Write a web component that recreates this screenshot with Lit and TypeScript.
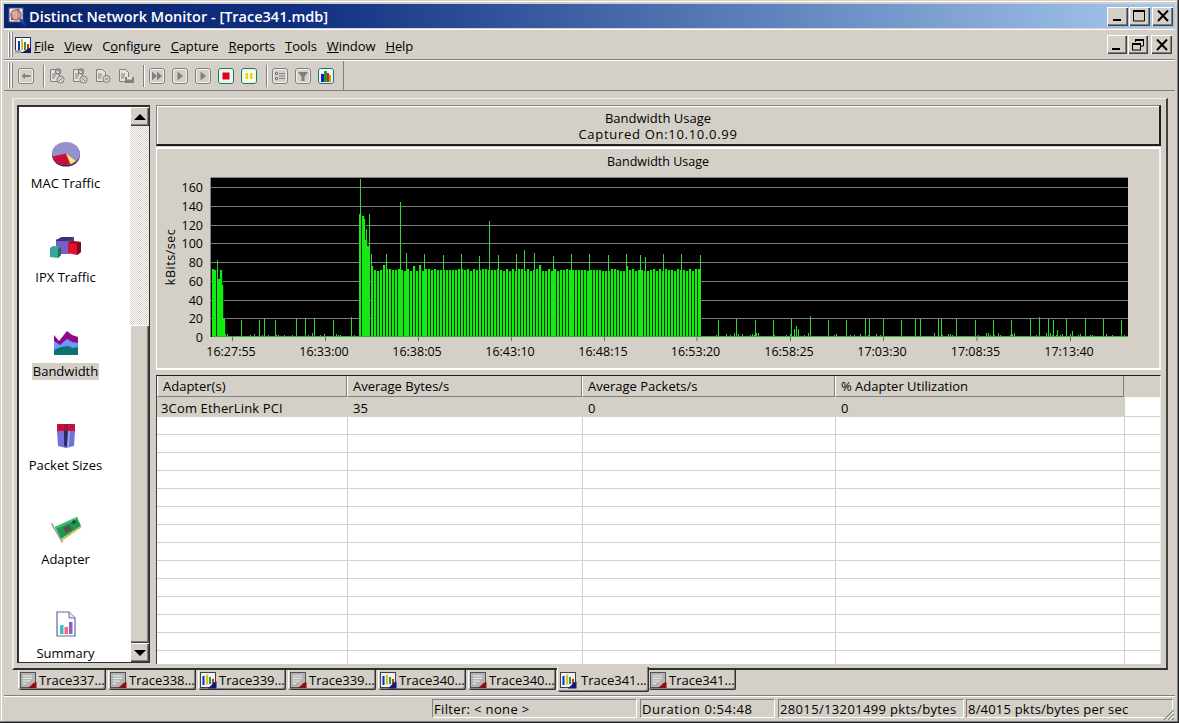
import { LitElement, html, css, svg } from "lit";
import { customElement } from "lit/decorators.js";

const FONT = 13;

/* ---------- chart data ---------- */
let seed = 12345;
const rnd = () => {
  seed = (seed * 1664525 + 1013904223) >>> 0;
  return seed / 4294967296;
};
const Y0 = 337;
const SCALE = 150 / 160;
const thick: [number, number][] = [
  [212, 72], [214, 71], [218, 62], [220, 71], [221, 55], [223, 20],
  [359, 131], [362, 129], [363, 126], [365, 103], [367, 97],
];
for (let x = 371; x < 699; x += 3) {
  let v = 70 + rnd() * 3;
  if (rnd() < 0.06) v = 75 + rnd() * 2;
  thick.push([x, v]);
}
const thin: [number, number][] = [
  [217, 82], [225, 3], [227, 3], [230, 1],
  [241, 18], [259, 18], [264, 20], [275, 18], [296, 20], [305, 20], [314, 20], [333, 18], [351, 21],
  [360, 168], [366, 115], [369, 131], [371, 88],
  [386, 89], [400, 144], [406, 90], [424, 88], [443, 87], [461, 89], [479, 86], [489, 124],
  [498, 87], [516, 88], [524, 93], [534, 90], [553, 86], [571, 88], [589, 88], [608, 87],
  [626, 88], [640, 87], [645, 85], [663, 88], [681, 89], [700, 87],
  [718, 18], [736, 19], [755, 18], [773, 18], [791, 19], [794, 8], [796, 12], [798, 8], [810, 22],
  [828, 18], [846, 18], [865, 19], [869, 19], [883, 19], [901, 18], [915, 19], [920, 19],
  [938, 19], [941, 19], [956, 19], [975, 18], [993, 18], [1011, 18], [1030, 19], [1039, 21],
  [1048, 19], [1053, 18], [1057, 7], [1066, 19], [1072, 6], [1085, 20], [1103, 19], [1121, 18],
];
for (let x = 232; x < 1128; x += 2) {
  if (x > 357 && x < 702) continue;
  if (rnd() < 0.45) thin.push([x, 1 + rnd() * rnd() * 5]);
}
const pathOf = (d: [number, number][], w: number) =>
  d.map(([x, v]) => { const h = Math.max(1, Math.round(v * SCALE)); return `M${x} ${Y0 - h}h${w}v${h}h-${w}z`; }).join("");
const THICK = pathOf(thick, 2);
const HALO = pathOf(thick, 3);
const THIN = pathOf(thin, 1);
const GRID = [187, 206, 225, 243, 262, 281, 300, 318];
const YLABELS: [string, number][] = [["160", 187], ["140", 206], ["120", 225], ["100", 243], ["80", 262], ["60", 281], ["40", 300], ["20", 318], ["0", 337]];
const XLABELS: [string, number][] = [["16:27:55", 232.5], ["16:33:00", 325.5], ["16:38:05", 418.5], ["16:43:10", 511.5], ["16:48:15", 604.5], ["16:53:20", 697], ["16:58:25", 790.5], ["17:03:30", 883.5], ["17:08:35", 977], ["17:13:40", 1070.5]];

/* ---------- icons ---------- */
const appIcon = html`<svg width="19" height="21" viewBox="0 0 19 21">
  <rect x="1" y="2" width="14" height="14" fill="#e8e8f4" stroke="#3050a0"/>
  <rect x="3" y="8" width="2.5" height="6" fill="#c02030"/><rect x="6" y="5" width="2.5" height="9" fill="#e0a020"/><rect x="9" y="3" width="2.5" height="11" fill="#d04020"/>
  <circle cx="8" cy="9" r="5" fill="#a8c8f0" fill-opacity=".6" stroke="#d06040" stroke-width="1.5"/>
  <path d="M12 13l5 6" stroke="#2040a0" stroke-width="2.4"/></svg>`;
const menuIcon = html`<svg width="17" height="17" viewBox="0 0 17 17">
  <rect x=".5" y=".5" width="15" height="15" fill="#fff" stroke="#203060"/>
  <rect x="3" y="4" width="2" height="9" fill="#1030c0"/><rect x="6" y="2" width="2" height="11" fill="#d0c020"/><rect x="9" y="5" width="2" height="8" fill="#20a030"/><rect x="12" y="7" width="2" height="6" fill="#d03020"/>
  <path d="M6 16L16 16V10z" fill="#101870"/><rect x="0" y="13" width="6" height="3" fill="#a0a0a0"/></svg>`;

const btn = (body: unknown, stroke = "#808080", fill = "#d4d0c8") => html`<svg class="tb" width="16" height="16" viewBox="0 0 16 16">
  <rect x=".5" y=".5" width="15" height="15" rx="2.5" fill="${fill}" stroke="${stroke}"/>
  <rect x="1.5" y="1.5" width="13" height="13" rx="1.5" fill="none" stroke="#f4f2ec" stroke-opacity=".9"/>${body}</svg>`;
const G = "#808080";
const docIcon = (over: unknown) => html`<svg class="tb" width="16" height="16" viewBox="0 0 16 16">
  <path d="M1.5 1.5h6l3 3v9h-9z" fill="#e4e2da" stroke="${G}"/><path d="M3 6h4M3 8h4M3 10h3" stroke="${G}"/>${over}</svg>`;
const TOOLS = [
  [btn(svg`<path d="M3 8l4.500-4v2.500h5.500v3H7.500V12z" fill="${G}" stroke="#f4f2ec" stroke-width=".6"/>`)],
  [
    docIcon(svg`<circle cx="9" cy="3.5" r="2.5" fill="none" stroke="${G}" stroke-width="1.4"/><circle cx="11.5" cy="11.5" r="3.6" fill="#d4d0c8" stroke="${G}"/><path d="M10 13l3-3" stroke="${G}"/>`),
    docIcon(svg`<circle cx="9" cy="3.5" r="2.5" fill="none" stroke="${G}" stroke-width="1.4"/><circle cx="11.5" cy="11.5" r="3.6" fill="#d4d0c8" stroke="${G}"/><path d="M10 10l3 3" stroke="${G}"/>`),
    docIcon(svg`<circle cx="11.5" cy="11" r="3.6" fill="#d4d0c8" stroke="${G}"/><path d="M10 11h3" stroke="${G}"/>`),
    docIcon(svg`<path d="M7 9h9v6H7z" fill="${G}"/><path d="M9 9h5v2.500H9z" fill="#e4e2da"/>`),
  ],
  [
    btn(svg`<path d="M3 3.500l5 4.500-5 4.500zM8 3.500l5 4.500-5 4.500z" fill="${G}"/>`),
    btn(svg`<path d="M5.500 3.500l5.500 4.500-5.500 4.500z" fill="${G}"/>`),
    btn(svg`<path d="M5.500 3.500l5.500 4.500-5.500 4.500z" fill="${G}"/>`),
    btn(svg`<rect x="4.500" y="4.500" width="7" height="7" fill="#e00018"/>`, "#107878", "#f2f2ec"),
    btn(svg`<rect x="4.500" y="5" width="2.500" height="6" fill="#e6d818"/><rect x="9" y="5" width="2.500" height="6" fill="#e6d818"/>`, "#107878", "#fbfbe4"),
  ],
  [
    btn(svg`<path d="M3.500 4.500h2v2h-2zM3.500 9.500h2v2h-2z" fill="none" stroke="${G}"/><path d="M7 5.500h6M7 10.500h6M7 8h6" stroke="${G}"/>`),
    btn(svg`<path d="M3 4h10L9.500 8.500V13h-3V8.500z" fill="${G}"/>`),
    btn(svg`<rect x="2" y="2" width="12" height="12" fill="#f8f8f8"/><rect x="3" y="6" width="3" height="8" fill="#1020c0"/><rect x="6" y="3" width="3" height="11" fill="#18a028"/><rect x="9" y="5" width="2" height="9" fill="#d02018"/><rect x="11" y="7" width="2" height="7" fill="#e09010"/>`, "#107878", "#f2f2ec"),
  ],
];

const ICONS: Record<string, unknown> = {
  pie: html`<svg width="30" height="26" viewBox="0 0 30 26">
    <ellipse cx="15" cy="14" rx="14" ry="11.500" fill="#3a2050"/>
    <ellipse cx="15" cy="12.500" rx="14" ry="11.500" fill="#9491cb"/>
    <path d="M15 12.500L1.500 15.500C3 20.500 8 24 14 24c2 0 4-.3 5.500-1z" fill="#c80f3a"/>
    <path d="M15 12.500l4.500 10.500c2-.7 4-2 5-3.200z" fill="#f3ee62"/></svg>`,
  cubes: html`<svg width="32" height="22" viewBox="0 0 32 22">
    <path d="M6 3l6-3h12v13l-5 4H6z" fill="#7b5cc9"/><path d="M6 3l6-3h12l-5 4H6z" fill="#3d3270"/><path d="M19 4l5-4v13l-5 4z" fill="#4f3b94"/>
    <path d="M18 6l4-2 9 1v10l-4 3-9-2z" fill="#e30f2e"/><path d="M27 7l4-2v10l-4 3z" fill="#7a0a20"/><path d="M18 6l4-2 9 1-4 2z" fill="#8c1024"/>
    <path d="M0 11l3-2 8 .5V18l-3 3-8-1z" fill="#38a597"/><path d="M8 12l3-2.500V18l-3 3z" fill="#1d6a62"/></svg>`,
  area: html`<svg width="24" height="26" viewBox="0 0 24 26">
    <path d="M0 6l5 6 8-10 5 4 6 2v18H0z" fill="#8d0a8d"/>
    <path d="M0 12l6 4 7-6 5 3 6 1v12H0z" fill="#6c99f6"/>
    <path d="M0 21l7-3 7-1 5 2 5-1v8H0z" fill="#0c7270"/></svg>`,
  packet: html`<svg width="20" height="24" viewBox="0 0 20 24">
    <path d="M1 0h18v7H1z" fill="#c8103c"/><path d="M8 0h4v7H8z" fill="#8e1a40"/>
    <path d="M1 7h18l-1 15-8 2-8-2z" fill="#7272da"/><path d="M8 7h4v9l-1 7-3-1z" fill="#2b2b66"/><path d="M12 7h2l-1 16-2 .5z" fill="#a2a2e8"/></svg>`,
  adapter: html`<svg width="32" height="28" viewBox="0 0 32 28">
    <path d="M1 8l11 19 1-1L2 7z" fill="#909a94"/>
    <path d="M5 11L27 1l4 9-20 13z" fill="#1c9a4e"/><path d="M5 11L27 1l1 2L6 13z" fill="#40c070"/>
    <path d="M13 12l6-3 3 5-6 3z" fill="#555"/><path d="M22 5l3-1 1 3-3 1z" fill="#334"/>
    <path d="M11 23l20-13 .5 1.500L12 25z" fill="#d8c050"/></svg>`,
  summary: html`<svg width="20" height="26" viewBox="0 0 20 26">
    <path d="M1 1h12l6 6v18H1z" fill="#fff" stroke="#6068a0" stroke-width="1.200"/><path d="M13 1v6h6" fill="#e8e8f0" stroke="#6068a0"/>
    <rect x="4" y="14" width="3.500" height="9" fill="#38c4c4"/><rect x="8.500" y="16" width="3.500" height="7" fill="#f06a78"/><rect x="13" y="11" width="3.500" height="12" fill="#8a60c0"/></svg>`,
};
const NAV = [["pie", "MAC Traffic"], ["cubes", "IPX Traffic"], ["area", "Bandwidth"], ["packet", "Packet Sizes"], ["adapter", "Adapter"], ["summary", "Summary"]];

const tabDoc = html`<svg width="17" height="17" viewBox="0 0 17 17">
  <rect x=".5" y=".5" width="15" height="15" fill="#b4b4b4" stroke="#505050"/>
  <path d="M3 4h9M3 6.500h9M3 9h7M3 11.500h3" stroke="#ececec"/>
  <path d="M8 16l3-2.500 2.500-2.500 3-1v6z" fill="#8c0c14"/></svg>`;
const tabChart = html`<svg width="17" height="17" viewBox="0 0 17 17">
  <rect x=".5" y=".5" width="15" height="15" fill="#f0f0f0" stroke="#404040"/>
  <rect x="2.500" y="4" width="2" height="9" fill="#1030c0"/><rect x="6" y="2.500" width="2" height="10" fill="#c8c820"/><rect x="9" y="5" width="2" height="7" fill="#20a030"/><rect x="12" y="7" width="2" height="5" fill="#d03020"/>
  <path d="M8 16.500l3-3 3-3 2.500-1v7z" fill="#101880"/></svg>`;
const TABS: [string, boolean, boolean][] = [
  ["Trace337...", false, false], ["Trace338...", false, false], ["Trace339...", true, false], ["Trace339...", false, false],
  ["Trace340...", true, false], ["Trace340...", false, false], ["Trace341...", true, true], ["Trace341...", false, false],
];

const glyph = {
  min: html`<svg width="12" height="12" viewBox="0 0 12 12"><rect x="1" y="9" width="8" height="2" fill="#000"/></svg>`,
  max: html`<svg width="13" height="12" viewBox="0 0 13 12"><path d="M.5 .5h11v10.500H.5z" fill="none" stroke="#000"/><rect x="0" y="0" width="12" height="2" fill="#000"/></svg>`,
  rest: html`<svg width="13" height="12" viewBox="0 0 13 12"><path d="M3.500 3V.5h8v6.500H9" fill="none" stroke="#000"/><rect x="3" y="0" width="9" height="2" fill="#000"/><rect x=".5" y="4.500" width="8" height="6.500" fill="none" stroke="#000"/><rect x="0" y="4" width="9" height="2" fill="#000"/></svg>`,
  close: html`<svg width="12" height="12" viewBox="0 0 12 12"><path d="M1 .5l10 10.500M11 .5L1 11" stroke="#000" stroke-width="2"/></svg>`,
};

@customElement("app-root")
export class AppRoot extends LitElement {
  static styles = css`
    :host {
      display: flex; flex-direction: column; box-sizing: border-box;
      width: 1179px; height: 723px; overflow: hidden;
      padding: 4px 4px 2px; background: #d4d0c8; color: #000;
      font: ${FONT}px/17px "Open Sans", "Noto Sans", sans-serif;
      box-shadow: inset -1px -1px #202020, inset -2px -2px #808080, inset 1px 1px #d4d0c8, inset 2px 2px #fff;
    }
    .bevel { background: #d4d0c8; box-shadow: inset 1px 1px #fff, inset -1px -1px #404040, inset -2px -2px #808080; }

    .title { display: flex; align-items: center; height: 24px; flex: none; color: #fff; padding-left: 4px;
      background: linear-gradient(90deg, #0a246a, #0f2f80 25%, #a6caf0); }
    .title .name { font-size: 14.500px; font-weight: 600; margin-left: 2px; white-space: nowrap; }
    .winbtns { display: flex; margin-left: auto; margin-right: 2px; gap: 1px; }
    .wb { display: flex; align-items: center; justify-content: center; width: 21px; height: 19px; }
    .wb.last { margin-left: 1px; }

    .band { flex: none; display: flex; align-items: center; height: 31px; box-sizing: border-box;
      border-top: 1px solid #fff; border-bottom: 1px solid #808080; }
    .band.first { margin-top: 1px; }
    .grip { width: 5px; height: 25px; margin-left: 4px; flex: none;
      background: linear-gradient(90deg, #fff 0 1px, #808080 1px 2px, #d4d0c8 2px 3px, #fff 3px 4px, #808080 4px 5px); }
    .menu { display: flex; align-items: center; flex: 1; }
    .menu .mi { margin-left: 2px; margin-top: 1px; display: flex; }
    .menu .items { display: flex; gap: 10px; margin-left: 2px; padding-top: 3px; white-space: nowrap; letter-spacing: -.1px; }
    .menu u { text-underline-offset: 1px; }
    .mdi { display: flex; margin-left: auto; margin-right: 3px; }
    .mdi .wb { width: 20px; margin-right: 1px; }
    .mdi .wb.last { width: 21px; margin-left: 2px; margin-right: 0; }

    .toolbar { display: flex; align-items: center; height: 29px; width: 340px; box-sizing: border-box; border-right: 1px solid #808080; }
    .tg { display: flex; gap: 7px; align-items: center; padding: 0 9px 0 5px; border-right: 1px solid #808080; box-shadow: 1px 0 #fff; height: 22px; }
    .tg.plain { border-right: 0; box-shadow: none; padding-right: 0; }
    .tb { display: block; flex: none; overflow: visible; }

    .frame { flex: none; display: flex; gap: 6px; box-sizing: border-box; height: 572px; margin: 7px 7px 0 8px;
      padding: 6px 5px 4px 3px; border-left: 2px solid #ecebe6; border-top: 1px solid #f0efea;
      border-right: 2px solid #404040; border-bottom: 2px solid #303030; }

    .side { flex: none; width: 133px; height: 558px; box-sizing: border-box; display: flex; background: #fff;
      border: 2px solid #303030; border-right-width: 1px; border-bottom-width: 1px; overflow: hidden; }
    .navlist { flex: 1; overflow: hidden; padding-top: 14px; }
    .nav { width: 93px; height: 94px; display: flex; flex-direction: column; align-items: center; }
    .nav .ic { height: 30px; margin-top: 18px; display: flex; align-items: center; justify-content: center; }
    .nav .lb { margin-top: 6px; white-space: nowrap; padding: 0 1px; }
    .nav .lb.sel { background: #d4d0c8; }
    .sb { flex: none; width: 19px; display: flex; flex-direction: column; }
    .sb .b { height: 19px; flex: none; display: flex; align-items: center; justify-content: center; }
    .sb .track { height: 199px; flex: none; background: repeating-conic-gradient(#fff 0 25%, #d4d0c8 0 50%) 0 0 / 2px 2px; }
    .sb .thumb { flex: 1; }
    .tri { width: 0; height: 0; border-left: 6px solid transparent; border-right: 6px solid transparent; }
    .tri.up { border-bottom: 6px solid #000; }
    .tri.dn { border-top: 6px solid #000; }

    .content { flex: 1; display: flex; flex-direction: column; min-width: 0; }
    .head { height: 41px; flex: none; box-sizing: border-box; text-align: center; padding-top: 4px; line-height: 16px;
      border: 1px solid #808080; border-right: 2px solid #202020; border-bottom: 2px solid #202020; box-shadow: inset 1px 1px #fff; }
    .head span { letter-spacing: .7px; }
    .chart { margin-top: 1px; flex: none; height: 223px; box-sizing: border-box; border: 2px solid #fff; border-left-width: 1px; border-right-color: #f4f4f0; }
    .chart .ct { height: 25px; text-align: center; padding-top: 4px; box-sizing: border-box; font-size: 12.500px; }
    .chart svg { display: block; }
    .chart text { font: 12.500px "Open Sans", "Noto Sans", sans-serif; fill: #000; }
    .chart text.unit { letter-spacing: .5px; }

    .table { margin-top: 5px; flex: 1; min-height: 0; overflow: hidden; background: #fff; border-top: 1px solid #202020; border-left: 1px solid #404040; border-right: 1px solid #f0f0f0; }
    .thead { display: grid; grid-template-columns: 190px 235px 253px 289px 1fr; height: 21px; background: #d4d0c8; }
    .thead div { box-sizing: border-box; padding: 2px 0 0 5px; border-left: 1px solid #fff; border-right: 1px solid #808080; border-bottom: 1px solid #808080; white-space: nowrap; }
    .thead div:last-child { border-right: 0; border-left: 0; border-bottom: 1px solid #d4d0c8; }
    .row { display: grid; grid-template-columns: 191px 235px 253px 289px 1fr; height: 18px; }
    .row div { box-sizing: border-box; border-right: 1px solid #d4d0c8; border-bottom: 1px solid #d4d0c8; }
    .row div:last-child { border-right: 0; }
    .row.sel { height: 20px; }
    .row.sel div { background: #d4d0c8; border: 0; padding: 3px 0 0 5px; white-space: nowrap; }
    .row.sel div:first-child { padding-left: 4px; letter-spacing: .15px; }
    .row.sel div:last-child { background: #fff; border-bottom: 1px solid #d4d0c8; }

    .tabs { flex: none; height: 25px; display: flex; padding-left: 14px; gap: 2px; position: relative; }
    .tab { width: 88px; height: 20px; box-sizing: border-box; display: flex; align-items: center; gap: 2px; padding-left: 2px; white-space: nowrap;
      background: #d4d0c8; box-shadow: inset 1px 0 #fff, inset -1px 0 #303030, inset 0 -1px #303030, inset -2px -2px #808080; border-radius: 0 0 2px 2px; }
    .tab.sel { width: 92px; height: 25px; margin: -3px -3px 0 -1px; position: relative; padding-top: 2px; padding-left: 3px; gap: 4px; }

    .status { flex: 1; display: flex; box-sizing: border-box; border-top: 1px solid #808080; box-shadow: inset 0 1px #fff; padding: 3px 0 0 428px; position: relative; }
    .sp { height: 19px; box-sizing: border-box; border: 1px solid #808080; border-right-color: #fff; border-bottom-color: #fff; padding-left: 1px; line-height: 19px; white-space: nowrap; overflow: hidden; }
    .s1 { width: 205px; margin-right: 3px; letter-spacing: .35px; }
    .s2 { width: 135px; margin-right: 3px; letter-spacing: .6px; }
    .s3 { width: 186px; margin-right: 2px; letter-spacing: .35px; }
    .s4 { width: 207px; letter-spacing: .2px; }
    .gr { position: absolute; right: 0; bottom: 0; }
  `;

  render() {
    return html`
      <div class="title">${appIcon}<span class="name">Distinct Network Monitor - [Trace341.mdb]</span>
        <div class="winbtns">
          <div class="wb bevel">${glyph.min}</div><div class="wb bevel">${glyph.max}</div><div class="wb bevel last">${glyph.close}</div>
        </div>
      </div>

      <div class="band first">
        <div class="grip"></div>
        <div class="menu">
          <span class="mi">${menuIcon}</span>
          <div class="items">
            <span><u>F</u>ile</span><span><u>V</u>iew</span><span>C<u>o</u>nfigure</span><span><u>C</u>apture</span><span><u>R</u>eports</span><span><u>T</u>ools</span><span><u>W</u>indow</span><span><u>H</u>elp</span>
          </div>
          <div class="mdi">
            <div class="wb bevel">${glyph.min}</div><div class="wb bevel">${glyph.rest}</div><div class="wb bevel last">${glyph.close}</div>
          </div>
        </div>
      </div>

      <div class="band">
        <div class="toolbar">
          <div class="grip"></div>
          ${TOOLS.map((g, i) => html`<div class="tg ${i === TOOLS.length - 1 ? "plain" : ""}">${g}</div>`)}
        </div>
      </div>

      <div class="frame">
        <div class="side">
          <div class="navlist">
            ${NAV.map(([ic, lb]) => html`<div class="nav"><div class="ic">${ICONS[ic]}</div><div class="lb ${lb === "Bandwidth" ? "sel" : ""}">${lb}</div></div>`)}
          </div>
          <div class="sb">
            <div class="b bevel"><div class="tri up"></div></div>
            <div class="track"></div>
            <div class="thumb bevel"></div>
            <div class="b bevel"><div class="tri dn"></div></div>
          </div>
        </div>

        <div class="content">
          <div class="head">Bandwidth Usage<br /><span>Captured On:10.10.0.99</span></div>
          <div class="chart">
            <div class="ct">Bandwidth Usage</div>
            <svg width="1002" height="192" viewBox="157 174 1002 192">
              <rect x="211" y="178" width="917" height="159" fill="#000"/>
              <path d="M211 177.500H1128" stroke="#808080"/>
              <path d="M210.500 178V337" stroke="#808080"/>
              ${GRID.map((y) => svg`<path d="M211 ${y + 0.5}H1128" stroke="#7c7c7c"/>`)}
              <path d="${HALO}" fill="#032c03" shape-rendering="crispEdges"/>
              <path d="${THICK}" fill="#0cf00c" shape-rendering="crispEdges"/>
              <path d="${THIN}" fill="#2ed82e" shape-rendering="crispEdges"/>
              ${GRID.map((y) => svg`<path d="M211 ${y + 0.5}H1128" stroke="#808080" stroke-opacity=".22"/>`)}
              <path d="M212 336.500H1128" stroke="#30b030" shape-rendering="crispEdges"/>
              ${YLABELS.map(([t, y]) => svg`<text x="203" y="${y + 5}" text-anchor="end">${t}</text>`)}
              ${XLABELS.map(([t, x]) => svg`<path d="M${x} 337v4" stroke="#707070"/><text x="${x - 1.5}" y="356" text-anchor="middle">${t}</text>`)}
              <text class="unit" transform="translate(175 257) rotate(-90)" text-anchor="middle">kBits/sec</text>
            </svg>
          </div>
          <div class="table">
            <div class="thead"><div>Adapter(s)</div><div>Average Bytes/s</div><div>Average Packets/s</div><div>% Adapter Utilization</div><div></div></div>
            <div class="row sel"><div>3Com EtherLink PCI</div><div>35</div><div>0</div><div>0</div><div></div></div>
            ${Array.from({ length: 14 }, () => html`<div class="row"><div></div><div></div><div></div><div></div><div></div></div>`)}
          </div>
        </div>
      </div>

      <div class="tabs">
        ${TABS.map(([t, chart, sel]) => html`<div class="tab ${sel ? "sel" : ""}">${chart ? tabChart : tabDoc}<span>${t}</span></div>`)}
      </div>

      <div class="status">
        <div class="sp s1">Filter: &lt; none &gt;</div>
        <div class="sp s2">Duration 0:54:48</div>
        <div class="sp s3">28015/13201499 pkts/bytes</div>
        <div class="sp s4">8/4015 pkts/bytes per sec</div>
        <svg class="gr" width="14" height="14" viewBox="0 0 14 14"><path d="M13 3L3 13M13 7L7 13M13 11L11 13" stroke="#808080" stroke-width="1.400"/><path d="M13 4.500L4.500 13M13 8.500L8.500 13" stroke="#fff"/></svg>
      </div>
    `;
  }
}
